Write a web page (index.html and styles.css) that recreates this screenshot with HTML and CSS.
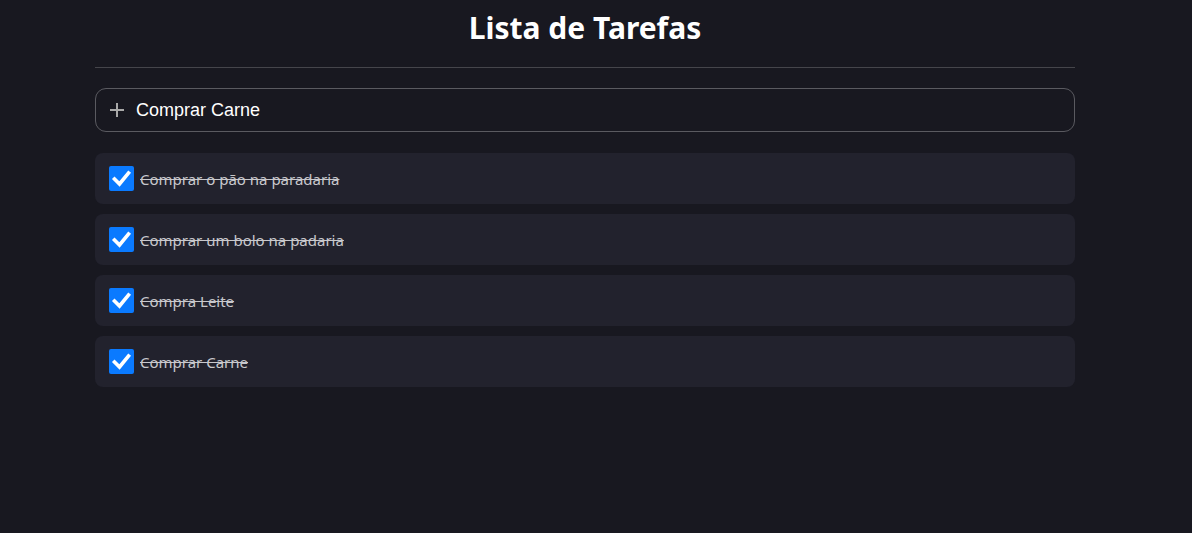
FILE: index.html
```html
<!DOCTYPE html>
<html lang="pt">
<head>
<meta charset="utf-8">
<title>Lista de Tarefas</title>
<link rel="stylesheet" href="styles.css">
</head>
<body>
<div class="page">
  <main class="container">
    <h1 class="title">Lista de Tarefas</h1>
    <hr class="divider">
    <form class="add-form">
      <svg class="plus" width="18" height="18" viewBox="0 0 18 18"><path d="M9 2v14M2 9h14" stroke="#a9a9a9" stroke-width="2" fill="none"/></svg>
      <span class="add-text">Comprar Carne</span>
    </form>
    <ul class="tasks">
      <li class="task"><span class="check"><svg width="25" height="25" viewBox="0 0 25 25"><path d="M5.5 13 L10.5 18 L19.5 7" stroke="#fff" stroke-width="3.6" fill="none" stroke-linecap="square"/></svg></span><span class="label">Comprar o pão na paradaria</span></li>
      <li class="task"><span class="check"><svg width="25" height="25" viewBox="0 0 25 25"><path d="M5.5 13 L10.5 18 L19.5 7" stroke="#fff" stroke-width="3.6" fill="none" stroke-linecap="square"/></svg></span><span class="label">Comprar um bolo na padaria</span></li>
      <li class="task"><span class="check"><svg width="25" height="25" viewBox="0 0 25 25"><path d="M5.5 13 L10.5 18 L19.5 7" stroke="#fff" stroke-width="3.6" fill="none" stroke-linecap="square"/></svg></span><span class="label">Compra Leite</span></li>
      <li class="task"><span class="check"><svg width="25" height="25" viewBox="0 0 25 25"><path d="M5.5 13 L10.5 18 L19.5 7" stroke="#fff" stroke-width="3.6" fill="none" stroke-linecap="square"/></svg></span><span class="label">Comprar Carne</span></li>
    </ul>
  </main>
</div>
</body>
</html>
```
FILE: styles.css
```css
html, body {
  margin: 0;
  padding: 0;
  background: #181820;
  height: 100%;
}
body {
  font-family: "Noto Sans", "Open Sans", sans-serif;
  color: #fff;
}
.page {
  width: 1170px;
}
.container {
  width: 980px;
  margin: 0 auto;
}
.title {
  margin: 0;
  padding-top: 8px;
  height: 50px;
  text-align: center;
  font-size: 30px;
  line-height: 40px;
  font-weight: 700;
  color: #fff;
}
.divider {
  margin: 9px 0 0 0;
  border: 0;
  border-top: 1px solid #45454b;
  height: 0;
}
.add-form {
  margin-top: 20px;
  height: 42px;
  border: 1px solid #5a5a60;
  border-radius: 11px;
  display: flex;
  align-items: center;
  padding-left: 12px;
  gap: 10px;
}
.plus {
  display: block;
}
.add-text {
  font-family: "Liberation Sans", Arial, sans-serif;
  font-size: 18px;
  color: #fff;
}
.tasks {
  list-style: none;
  margin: 21px 0 0 0;
  padding: 0;
  display: flex;
  flex-direction: column;
  gap: 10px;
}
.task {
  height: 51px;
  background: #22222d;
  border-radius: 8px;
  display: flex;
  align-items: center;
  padding-left: 14px;
  gap: 6px;
}
.check {
  width: 25px;
  height: 25px;
  background: #0a7aff;
  border-radius: 2px;
  display: block;
}
.check svg {
  display: block;
}
.label {
  font-size: 15px;
  color: #c8c8cc;
  text-decoration: line-through;
}
```
